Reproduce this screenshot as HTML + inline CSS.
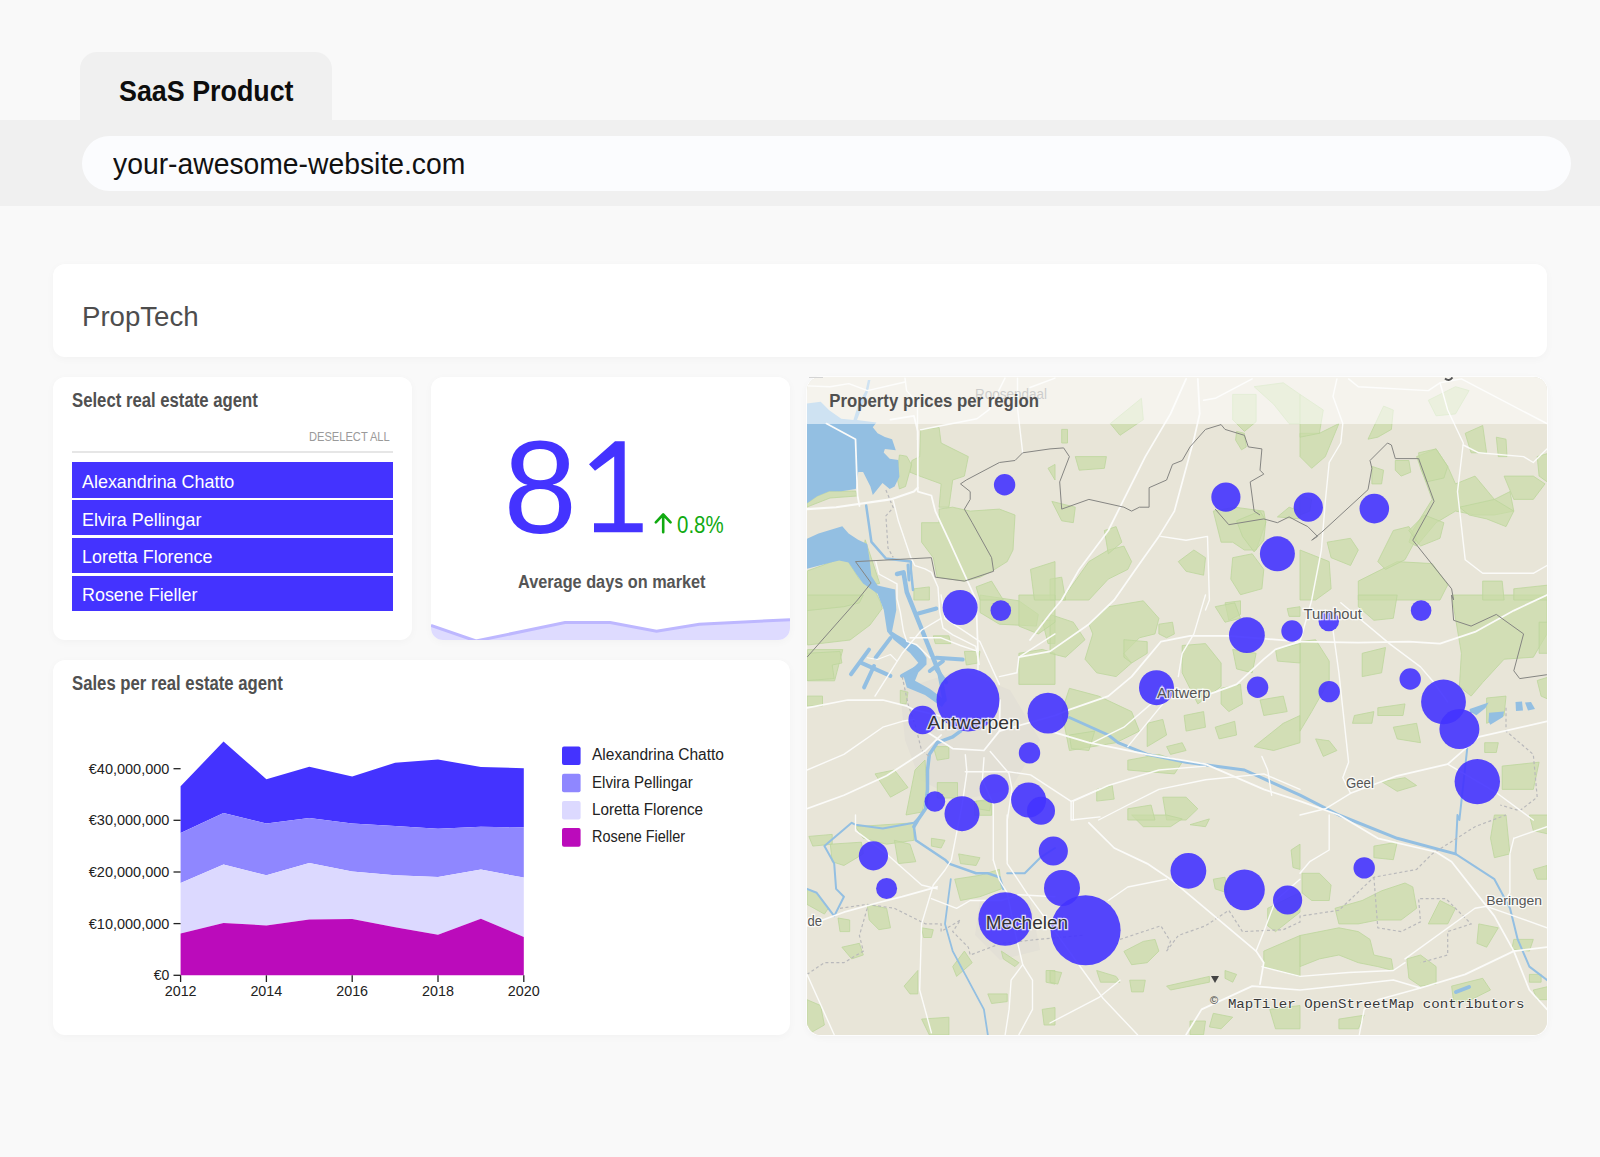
<!DOCTYPE html>
<html><head><meta charset="utf-8">
<style>
*{margin:0;padding:0;box-sizing:border-box}
html,body{width:1600px;height:1157px;overflow:hidden;background:#f9f9f9;font-family:"Liberation Sans",sans-serif}
.abs{position:absolute}
.t{position:absolute;white-space:nowrap;line-height:1}
#tab{left:80px;top:52px;width:252px;height:68px;background:#f0f0f0;border-radius:17px 17px 0 0}
#band{left:0;top:120px;width:1600px;height:86px;background:#f0f0f0}
#pill{left:82px;top:136px;width:1489px;height:55px;background:#fbfcfe;border-radius:28px}
.card{position:absolute;background:#fff;border-radius:12px;box-shadow:0 2px 8px rgba(0,0,0,0.03)}
.item{position:absolute;left:72px;width:321px;height:35.4px;background:#4433ff}
.item span{position:absolute;left:9.5px;top:10.6px;color:#fff;font-size:18.5px;line-height:1;white-space:nowrap;transform:scaleX(0.968);transform-origin:0 0}
</style></head>
<body>
<div id="tab" class="abs"></div>
<div id="band" class="abs"></div>
<div id="pill" class="abs"></div>
<div class="t" id="saas" style="left:119px;top:76px;font-size:29.5px;font-weight:bold;color:#0d0d0d;transform:scaleX(0.91);transform-origin:0 0">SaaS Product</div>
<div class="t" id="url" style="left:113px;top:149px;font-size:29.4px;color:#111;transform:scaleX(0.963);transform-origin:0 0">your-awesome-website.com</div>

<div class="card" style="left:53px;top:264px;width:1494px;height:93px"></div>
<div class="t" id="prop" style="left:82px;top:302.5px;font-size:28px;color:#4d4d4d;transform:scaleX(0.986);transform-origin:0 0">PropTech</div>

<!-- select card -->
<div class="card" style="left:53px;top:377px;width:359px;height:263px"></div>
<div class="t" id="selt" style="left:72px;top:391px;font-size:19.5px;font-weight:bold;color:#505050;transform:scaleX(0.857);transform-origin:0 0">Select real estate agent</div>
<div class="t" id="desel" style="left:309px;top:430px;font-size:13px;color:#9a9a9a;transform:scaleX(0.855);transform-origin:0 0">DESELECT ALL</div>
<div class="abs" style="left:72px;top:451px;width:321px;height:2px;background:#e6e6e6"></div>
<div class="item" style="top:462.4px"><span>Alexandrina Chatto</span></div>
<div class="item" style="top:500.1px"><span>Elvira Pellingar</span></div>
<div class="item" style="top:537.8px"><span>Loretta Florence</span></div>
<div class="item" style="top:575.5px"><span>Rosene Fieller</span></div>

<!-- KPI card -->
<div class="card" style="left:431px;top:377px;width:359px;height:263px;overflow:hidden">
  <svg class="abs" style="left:0;top:0" width="359" height="263">
    <polygon points="0,248.5 45,264 134,245.5 179.2,245.5 225.5,254.3 268.3,247.3 359,242.7 359,263 0,263" fill="#dedbff"/>
    <polyline points="0,248.5 45,264 134,245.5 179.2,245.5 225.5,254.3 268.3,247.3 359,242.7" fill="none" stroke="#bdb7ff" stroke-width="3"/>
  </svg>
</div>
<div class="t" id="big" style="left:503.5px;top:421.8px;font-size:132px;color:#4433ff">8</div>
<svg class="abs" style="left:0;top:0" width="800" height="600"><polygon points="615,441.2 624.7,441.2 624.7,523.2 642.7,523.2 642.7,532.2 594,532.2 594,523.2 614.2,523.2 614.2,456.5 595,470.7 589,464.3" fill="#4433ff"/>
<path d="M663.2,532.2 V515 M655.8,522.3 L663.2,514.5 L670.6,522.3" fill="none" stroke="#11aa11" stroke-width="2.6" stroke-linecap="round" stroke-linejoin="round"/></svg>
<div class="t" id="pct" style="left:676.5px;top:514px;font-size:23px;color:#11aa11;transform:scaleX(0.89);transform-origin:0 0">0.8%</div>
<div class="t" id="avg" style="left:517.5px;top:573px;font-size:18px;font-weight:bold;color:#555;transform:scaleX(0.904);transform-origin:0 0">Average days on market</div>

<!-- chart card -->
<div class="card" style="left:53px;top:660px;width:737px;height:375px"></div>
<div class="t" id="salt" style="left:72px;top:674px;font-size:19.5px;font-weight:bold;color:#505050;transform:scaleX(0.857);transform-origin:0 0">Sales per real estate agent</div>
<svg class="abs" style="left:0;top:0;font-family:'Liberation Sans',sans-serif" width="800" height="1050" id="chart">
<polygon points="180.6,786.2 223.5,741.6 266.4,779.2 309.3,766.8 352.2,776.5 395.1,762.7 438.0,759.5 480.9,767.0 523.8,768.2 523.8,827.3 480.9,826.8 438.0,828.7 395.1,826.1 352.2,823.4 309.3,818.1 266.4,823.6 223.5,813.0 180.6,832.9" fill="#4433ff"/>
<polygon points="180.6,832.9 223.5,813.0 266.4,823.6 309.3,818.1 352.2,823.4 395.1,826.1 438.0,828.7 480.9,826.8 523.8,827.3 523.8,877.6 480.9,869.6 438.0,876.9 395.1,875.2 352.2,871.6 309.3,863.1 266.4,875.3 223.5,864.6 180.6,883.0" fill="#8f87ff"/>
<polygon points="180.6,883.0 223.5,864.6 266.4,875.3 309.3,863.1 352.2,871.6 395.1,875.2 438.0,876.9 480.9,869.6 523.8,877.6 523.8,936.9 480.9,918.8 438.0,934.7 395.1,927.2 352.2,919.0 309.3,919.5 266.4,925.4 223.5,923.0 180.6,933.4" fill="#dcd9ff"/>
<polygon points="180.6,933.4 223.5,923.0 266.4,925.4 309.3,919.5 352.2,919.0 395.1,927.2 438.0,934.7 480.9,918.8 523.8,936.9 523.8,975.3 480.9,975.3 438.0,975.3 395.1,975.3 352.2,975.3 309.3,975.3 266.4,975.3 223.5,975.3 180.6,975.3" fill="#bb0bbb"/>
<line x1="173.5" y1="975.3" x2="180.6" y2="975.3" stroke="#222" stroke-width="1.3"/>
<text x="153.8" y="980.3" font-size="14.3" fill="#222" textLength="15.6" lengthAdjust="spacingAndGlyphs">€0</text>
<line x1="173.5" y1="923.6" x2="180.6" y2="923.6" stroke="#222" stroke-width="1.3"/>
<text x="88.8" y="928.6" font-size="14.3" fill="#222" textLength="80.6" lengthAdjust="spacingAndGlyphs">€10,000,000</text>
<line x1="173.5" y1="872.0" x2="180.6" y2="872.0" stroke="#222" stroke-width="1.3"/>
<text x="88.8" y="877.0" font-size="14.3" fill="#222" textLength="80.6" lengthAdjust="spacingAndGlyphs">€20,000,000</text>
<line x1="173.5" y1="820.3" x2="180.6" y2="820.3" stroke="#222" stroke-width="1.3"/>
<text x="88.8" y="825.3" font-size="14.3" fill="#222" textLength="80.6" lengthAdjust="spacingAndGlyphs">€30,000,000</text>
<line x1="173.5" y1="768.7" x2="180.6" y2="768.7" stroke="#222" stroke-width="1.3"/>
<text x="88.8" y="773.7" font-size="14.3" fill="#222" textLength="80.6" lengthAdjust="spacingAndGlyphs">€40,000,000</text>
<line x1="180.6" y1="975.3" x2="180.6" y2="982" stroke="#222" stroke-width="1.3"/>
<text x="164.7" y="996" font-size="14.3" fill="#222" textLength="31.9" lengthAdjust="spacingAndGlyphs">2012</text>
<line x1="266.4" y1="975.3" x2="266.4" y2="982" stroke="#222" stroke-width="1.3"/>
<text x="250.4" y="996" font-size="14.3" fill="#222" textLength="31.9" lengthAdjust="spacingAndGlyphs">2014</text>
<line x1="352.2" y1="975.3" x2="352.2" y2="982" stroke="#222" stroke-width="1.3"/>
<text x="336.2" y="996" font-size="14.3" fill="#222" textLength="31.9" lengthAdjust="spacingAndGlyphs">2016</text>
<line x1="438.0" y1="975.3" x2="438.0" y2="982" stroke="#222" stroke-width="1.3"/>
<text x="422.1" y="996" font-size="14.3" fill="#222" textLength="31.9" lengthAdjust="spacingAndGlyphs">2018</text>
<line x1="523.8" y1="975.3" x2="523.8" y2="982" stroke="#222" stroke-width="1.3"/>
<text x="507.8" y="996" font-size="14.3" fill="#222" textLength="31.9" lengthAdjust="spacingAndGlyphs">2020</text>
<rect x="562" y="746.5" width="18.6" height="18.6" rx="2" fill="#4433ff"/>
<text x="592" y="760.4" font-size="16" fill="#222" textLength="132" lengthAdjust="spacingAndGlyphs">Alexandrina Chatto</text>
<rect x="562" y="773.7" width="18.6" height="18.6" rx="2" fill="#8f87ff"/>
<text x="592" y="787.6" font-size="16" fill="#222" textLength="100.7" lengthAdjust="spacingAndGlyphs">Elvira Pellingar</text>
<rect x="562" y="800.9" width="18.6" height="18.6" rx="2" fill="#dcd9ff"/>
<text x="592" y="814.8" font-size="16" fill="#222" textLength="111" lengthAdjust="spacingAndGlyphs">Loretta Florence</text>
<rect x="562" y="828.1" width="18.6" height="18.6" rx="2" fill="#bb0bbb"/>
<text x="592" y="842.0" font-size="16" fill="#222" textLength="93.1" lengthAdjust="spacingAndGlyphs">Rosene Fieller</text>
</svg>

<!-- map card -->
<div class="card" id="map" style="left:807px;top:377px;width:740px;height:658px;overflow:hidden;background:#e8e5d8;border-radius:14px;box-shadow:0 0 0 1px #fdfdfd,0 2px 8px rgba(0,0,0,0.04)">
<svg class="abs" style="left:0;top:0" width="740" height="658" viewBox="807 377 740 658" font-family="Liberation Sans, sans-serif">
<rect x="807" y="377" width="740" height="658" fill="#e8e5d8"/>
<polygon points="900.0,690.0 960.0,670.0 1010.0,690.0 1040.0,740.0 1010.0,790.0 960.0,800.0 920.0,780.0 905.0,740.0" fill="#e3e0d6"/>
<polygon points="980.0,900.0 1030.0,900.0 1040.0,950.0 1000.0,960.0 975.0,935.0" fill="#e3e0d6"/>
<polygon points="939.1,509.1 952.7,507.2 970.2,511.1 999.4,509.1 1015.0,515.0 1013.0,550.0 1007.2,561.6 991.6,571.3 980.0,577.2 964.4,581.1 937.2,577.2 933.3,557.7 921.6,542.2 921.6,522.7 939.1,522.7" fill="#c9dca6" fill-opacity="0.7" stroke="#bdd59c" stroke-width="0.8"/>
<polygon points="920.7,429.4 939.1,427.5 941.1,443.0 968.3,456.6 964.4,476.1 952.7,480.0 948.9,507.2 939.1,507.2 941.1,483.9 919.7,476.1 910.0,472.2 911.9,460.5 919.7,456.6" fill="#c9dca6" fill-opacity="0.7" stroke="#bdd59c" stroke-width="0.8"/>
<polygon points="807.5,570.8 821.4,565.8 837.8,559.3 847.7,560.9 859.2,579.0 874.0,588.8 880.5,602.0 882.2,608.5 870.0,625.0 850.0,640.0 807.5,645.0" fill="#c9dca6" fill-opacity="0.7" stroke="#bdd59c" stroke-width="0.8"/>
<polygon points="807.5,649.6 842.8,649.6 834.6,680.8 807.5,680.8" fill="#c9dca6" fill-opacity="0.7" stroke="#bdd59c" stroke-width="0.8"/>
<polygon points="899.4,455.0 906.7,456.2 911.5,464.7 905.5,486.5 899.4,488.9 897.0,476.8" fill="#c9dca6" fill-opacity="0.7" stroke="#bdd59c" stroke-width="0.8"/>
<polygon points="860.7,435.7 877.6,435.7 877.6,442.9 861.9,445.4" fill="#c9dca6" fill-opacity="0.7" stroke="#bdd59c" stroke-width="0.8"/>
<polygon points="806.8,503.4 817.1,496.2 829.2,491.3 855.8,491.0 857.0,496.0 830.0,498.0 807.0,507.0" fill="#c9dca6" fill-opacity="0.7" stroke="#bdd59c" stroke-width="0.8"/>
<polygon points="1061.7,600.0 1088.9,561.6 1108.3,550.0 1123.9,546.1 1131.6,561.6 1127.8,569.4 1108.3,579.1 1088.9,600.0" fill="#c9dca6" fill-opacity="0.7" stroke="#bdd59c" stroke-width="0.8"/>
<polygon points="1104.4,530.5 1116.1,526.6 1121.9,542.2 1108.3,553.8" fill="#c9dca6" fill-opacity="0.7" stroke="#bdd59c" stroke-width="0.8"/>
<polygon points="1213.3,511.1 1234.7,507.2 1263.8,511.1 1265.8,522.7 1256.1,550.0 1244.4,550.0 1232.7,542.2 1221.1,542.2" fill="#c9dca6" fill-opacity="0.7" stroke="#bdd59c" stroke-width="0.8"/>
<polygon points="1232.7,557.7 1252.2,553.8 1263.8,569.4 1261.9,588.8 1240.5,594.7 1230.8,579.1" fill="#c9dca6" fill-opacity="0.7" stroke="#bdd59c" stroke-width="0.8"/>
<polygon points="1178.3,561.6 1193.9,550.0 1205.5,557.7 1203.6,575.2 1186.1,571.3" fill="#c9dca6" fill-opacity="0.7" stroke="#bdd59c" stroke-width="0.8"/>
<polygon points="1110.3,423.6 1141.4,398.3 1143.3,419.7 1120.0,435.3" fill="#c9dca6" fill-opacity="0.7" stroke="#bdd59c" stroke-width="0.8"/>
<polygon points="1075.3,456.6 1106.4,456.6 1104.4,468.3 1079.2,470.2" fill="#c9dca6" fill-opacity="0.7" stroke="#bdd59c" stroke-width="0.8"/>
<polygon points="1051.9,501.4 1075.3,507.2 1073.3,522.7 1061.7,520.8" fill="#c9dca6" fill-opacity="0.7" stroke="#bdd59c" stroke-width="0.8"/>
<polygon points="1416.6,456.6 1436.1,448.9 1447.7,466.4 1455.5,483.9 1475.0,476.1 1494.4,499.4 1510.0,491.6 1513.8,511.1 1494.4,515.0 1475.0,515.0 1455.5,511.1 1436.1,522.7 1416.6,546.1 1408.9,542.2 1412.8,530.5 1432.2,499.4" fill="#c9dca6" fill-opacity="0.7" stroke="#bdd59c" stroke-width="0.8"/>
<polygon points="1358.3,581.1 1397.2,561.6 1432.2,563.6 1447.7,584.9 1440.0,600.0 1358.3,600.0" fill="#c9dca6" fill-opacity="0.7" stroke="#bdd59c" stroke-width="0.8"/>
<polygon points="1393.3,530.5 1408.9,526.6 1416.6,538.3 1405.0,559.7 1385.5,569.4 1377.8,561.6" fill="#c9dca6" fill-opacity="0.7" stroke="#bdd59c" stroke-width="0.8"/>
<polygon points="1300.0,433.3 1319.4,433.3 1338.9,423.6 1325.3,456.6 1311.7,468.3 1300.0,456.6" fill="#c9dca6" fill-opacity="0.7" stroke="#bdd59c" stroke-width="0.8"/>
<polygon points="1300.0,550.0 1329.2,561.6 1331.1,588.8 1315.6,600.0 1300.0,600.0" fill="#c9dca6" fill-opacity="0.7" stroke="#bdd59c" stroke-width="0.8"/>
<polygon points="1327.2,542.2 1350.5,538.3 1358.3,550.0 1350.5,565.5 1331.1,557.7" fill="#c9dca6" fill-opacity="0.7" stroke="#bdd59c" stroke-width="0.8"/>
<polygon points="1368.0,439.2 1383.6,406.1 1393.3,410.0 1391.4,429.4 1377.8,437.2" fill="#c9dca6" fill-opacity="0.7" stroke="#bdd59c" stroke-width="0.8"/>
<polygon points="1504.1,476.1 1533.3,476.1 1545.0,483.9 1533.3,499.4 1513.8,499.4" fill="#c9dca6" fill-opacity="0.7" stroke="#bdd59c" stroke-width="0.8"/>
<polygon points="1465.2,433.3 1482.7,425.5 1486.6,452.8 1471.1,452.8" fill="#c9dca6" fill-opacity="0.7" stroke="#bdd59c" stroke-width="0.8"/>
<polygon points="807.0,595.0 863.3,595.0 859.4,602.8 843.9,606.7 807.0,610.6" fill="#c9dca6" fill-opacity="0.7" stroke="#bdd59c" stroke-width="0.8"/>
<polygon points="807.0,653.3 840.0,651.4 841.9,663.0 832.2,665.0 834.2,678.6 807.0,680.5" fill="#c9dca6" fill-opacity="0.7" stroke="#bdd59c" stroke-width="0.8"/>
<polygon points="807.0,696.1 822.5,696.1 822.5,705.8 807.0,705.8" fill="#c9dca6" fill-opacity="0.7" stroke="#bdd59c" stroke-width="0.8"/>
<polygon points="980.0,595.0 1018.9,600.8 1038.3,614.4 1036.3,626.1 999.4,624.2 980.0,612.5" fill="#c9dca6" fill-opacity="0.7" stroke="#bdd59c" stroke-width="0.8"/>
<polygon points="1018.9,653.3 1042.2,649.4 1055.0,653.3 1055.0,684.4 1018.9,684.4" fill="#c9dca6" fill-opacity="0.7" stroke="#bdd59c" stroke-width="0.8"/>
<polygon points="875.0,773.9 894.4,770.0 908.0,787.5 890.5,797.2" fill="#c9dca6" fill-opacity="0.7" stroke="#bdd59c" stroke-width="0.8"/>
<polygon points="906.0,815.0 915.0,770.0 925.0,760.0 927.0,790.0 922.0,812.0" fill="#c9dca6" fill-opacity="0.7" stroke="#bdd59c" stroke-width="0.8"/>
<polygon points="937.3,782.6 957.5,782.6 957.5,798.0 937.3,798.0" fill="#c9dca6" fill-opacity="0.7" stroke="#bdd59c" stroke-width="0.8"/>
<polygon points="974.6,801.3 991.7,801.3 991.7,815.3 974.6,815.3" fill="#c9dca6" fill-opacity="0.7" stroke="#bdd59c" stroke-width="0.8"/>
<polygon points="1042.2,620.3 1055.0,620.3 1055.0,643.6 1048.0,643.6" fill="#c9dca6" fill-opacity="0.7" stroke="#bdd59c" stroke-width="0.8"/>
<polygon points="1108.3,606.7 1143.3,600.8 1158.9,618.3 1155.0,633.9 1139.4,637.8 1123.9,653.3 1131.6,663.0 1116.1,676.6 1096.7,672.8 1085.0,659.2 1092.8,633.9 1088.9,624.2" fill="#c9dca6" fill-opacity="0.7" stroke="#bdd59c" stroke-width="0.8"/>
<polygon points="1050.0,614.4 1073.3,622.2 1085.0,639.7 1065.6,657.2 1050.0,653.3" fill="#c9dca6" fill-opacity="0.7" stroke="#bdd59c" stroke-width="0.8"/>
<polygon points="1182.2,645.5 1205.5,643.6 1221.1,663.0 1221.1,686.4 1197.8,703.9 1182.2,672.8" fill="#c9dca6" fill-opacity="0.7" stroke="#bdd59c" stroke-width="0.8"/>
<polygon points="1123.9,639.7 1147.2,641.7 1147.2,653.3 1131.6,663.0 1123.9,657.2" fill="#c9dca6" fill-opacity="0.7" stroke="#bdd59c" stroke-width="0.8"/>
<polygon points="1158.9,624.2 1172.5,622.2 1174.4,633.9 1166.6,637.8 1158.9,633.9" fill="#c9dca6" fill-opacity="0.7" stroke="#bdd59c" stroke-width="0.8"/>
<polygon points="1069.4,688.3 1098.6,696.1 1131.6,711.6 1139.4,731.1 1116.1,742.7 1069.4,750.5 1061.7,711.6" fill="#c9dca6" fill-opacity="0.7" stroke="#bdd59c" stroke-width="0.8"/>
<polygon points="1147.2,723.3 1162.8,719.4 1166.6,735.0 1147.2,746.6" fill="#c9dca6" fill-opacity="0.7" stroke="#bdd59c" stroke-width="0.8"/>
<polygon points="1127.8,760.2 1158.9,754.4 1182.2,762.2 1174.4,773.9 1127.8,770.0" fill="#c9dca6" fill-opacity="0.7" stroke="#bdd59c" stroke-width="0.8"/>
<polygon points="1254.1,746.6 1283.3,723.3 1300.0,715.5 1300.0,742.7 1273.6,750.5" fill="#c9dca6" fill-opacity="0.7" stroke="#bdd59c" stroke-width="0.8"/>
<polygon points="1221.1,688.3 1240.5,684.4 1242.5,703.9 1228.8,711.6 1221.1,703.9" fill="#c9dca6" fill-opacity="0.7" stroke="#bdd59c" stroke-width="0.8"/>
<polygon points="1184.1,715.5 1203.6,711.6 1205.5,727.2 1186.1,731.1" fill="#c9dca6" fill-opacity="0.7" stroke="#bdd59c" stroke-width="0.8"/>
<polygon points="1215.2,727.2 1234.7,721.3 1236.6,735.0 1219.1,738.9" fill="#c9dca6" fill-opacity="0.7" stroke="#bdd59c" stroke-width="0.8"/>
<polygon points="1225.0,602.8 1240.5,600.8 1240.5,614.4 1228.8,620.3" fill="#c9dca6" fill-opacity="0.7" stroke="#bdd59c" stroke-width="0.8"/>
<polygon points="1162.8,797.2 1186.1,797.2 1197.8,808.8 1186.1,820.0 1166.6,820.0" fill="#c9dca6" fill-opacity="0.7" stroke="#bdd59c" stroke-width="0.8"/>
<polygon points="1232.7,649.4 1256.1,653.3 1252.2,672.8 1236.6,668.9" fill="#c9dca6" fill-opacity="0.7" stroke="#bdd59c" stroke-width="0.8"/>
<polygon points="1358.3,595.0 1397.2,595.0 1393.3,618.3 1373.9,620.3 1358.3,606.7" fill="#c9dca6" fill-opacity="0.7" stroke="#bdd59c" stroke-width="0.8"/>
<polygon points="1451.6,595.0 1494.4,595.0 1547.0,595.0 1547.0,633.9 1533.3,657.2 1504.1,659.2 1482.7,682.5 1471.1,696.1 1459.4,686.4 1461.4,653.3" fill="#c9dca6" fill-opacity="0.7" stroke="#bdd59c" stroke-width="0.8"/>
<polygon points="1300.0,641.7 1315.6,639.7 1329.2,661.1 1329.2,680.5 1311.7,711.6 1300.0,731.1" fill="#c9dca6" fill-opacity="0.7" stroke="#bdd59c" stroke-width="0.8"/>
<polygon points="1362.2,653.3 1385.5,647.5 1381.6,672.8 1362.2,676.6" fill="#c9dca6" fill-opacity="0.7" stroke="#bdd59c" stroke-width="0.8"/>
<polygon points="1486.6,698.0 1506.0,696.1 1504.1,715.5 1486.6,723.3" fill="#c9dca6" fill-opacity="0.7" stroke="#bdd59c" stroke-width="0.8"/>
<polygon points="1502.2,766.1 1539.1,762.2 1533.3,789.4 1502.2,789.4" fill="#c9dca6" fill-opacity="0.7" stroke="#bdd59c" stroke-width="0.8"/>
<polygon points="1393.3,727.2 1416.6,723.3 1420.5,742.7 1397.2,738.9" fill="#c9dca6" fill-opacity="0.7" stroke="#bdd59c" stroke-width="0.8"/>
<polygon points="1315.6,738.9 1329.2,740.8 1336.9,750.5 1323.3,756.4" fill="#c9dca6" fill-opacity="0.7" stroke="#bdd59c" stroke-width="0.8"/>
<polygon points="808.9,836.4 832.2,834.4 832.2,844.2 812.8,846.1" fill="#c9dca6" fill-opacity="0.7" stroke="#bdd59c" stroke-width="0.8"/>
<polygon points="830.3,844.2 861.4,842.2 863.3,853.9 843.9,865.5 832.2,861.7" fill="#c9dca6" fill-opacity="0.7" stroke="#bdd59c" stroke-width="0.8"/>
<polygon points="855.5,826.7 913.9,822.8 913.9,840.3 886.6,844.2 863.3,838.3" fill="#c9dca6" fill-opacity="0.7" stroke="#bdd59c" stroke-width="0.8"/>
<polygon points="807.0,888.9 816.7,892.8 828.3,908.3 824.4,914.1 807.0,904.4" fill="#c9dca6" fill-opacity="0.7" stroke="#bdd59c" stroke-width="0.8"/>
<polygon points="894.4,840.3 910.0,844.2 915.8,861.7 898.3,863.6" fill="#c9dca6" fill-opacity="0.7" stroke="#bdd59c" stroke-width="0.8"/>
<polygon points="954.7,879.2 980.0,875.3 999.4,869.4 1001.3,888.9 980.0,896.7 960.5,900.5" fill="#c9dca6" fill-opacity="0.7" stroke="#bdd59c" stroke-width="0.8"/>
<polygon points="867.2,904.4 886.6,908.3 890.5,927.8 878.9,929.7 869.2,920.0" fill="#c9dca6" fill-opacity="0.7" stroke="#bdd59c" stroke-width="0.8"/>
<polygon points="841.9,947.2 859.4,943.3 863.3,955.0 851.7,958.9" fill="#c9dca6" fill-opacity="0.7" stroke="#bdd59c" stroke-width="0.8"/>
<polygon points="807.0,999.7 820.6,1005.5 824.4,1025.0 810.8,1032.7 807.0,1032.0" fill="#c9dca6" fill-opacity="0.7" stroke="#bdd59c" stroke-width="0.8"/>
<polygon points="904.1,986.1 917.8,970.5 917.8,993.9 910.0,993.9" fill="#c9dca6" fill-opacity="0.7" stroke="#bdd59c" stroke-width="0.8"/>
<polygon points="952.7,966.6 964.4,951.1 972.2,962.7 956.6,976.4" fill="#c9dca6" fill-opacity="0.7" stroke="#bdd59c" stroke-width="0.8"/>
<polygon points="921.6,1019.1 948.9,1017.2 948.9,1035.0 929.4,1035.0" fill="#c9dca6" fill-opacity="0.7" stroke="#bdd59c" stroke-width="0.8"/>
<polygon points="1001.3,951.1 1018.9,962.7 1015.0,966.6 1003.3,958.9" fill="#c9dca6" fill-opacity="0.7" stroke="#bdd59c" stroke-width="0.8"/>
<polygon points="1123.9,951.4 1143.3,941.4 1155.0,939.4 1158.9,951.1 1147.2,962.7 1131.6,964.7" fill="#c9dca6" fill-opacity="0.7" stroke="#bdd59c" stroke-width="0.8"/>
<polygon points="1131.6,815.0 1166.6,815.0 1182.2,818.9 1170.5,826.7 1143.3,826.7" fill="#c9dca6" fill-opacity="0.7" stroke="#bdd59c" stroke-width="0.8"/>
<polygon points="1166.6,986.1 1209.4,976.4 1209.4,982.2 1170.5,990.0" fill="#c9dca6" fill-opacity="0.7" stroke="#bdd59c" stroke-width="0.8"/>
<polygon points="1213.3,879.2 1225.0,877.2 1226.9,892.8 1215.2,888.9" fill="#c9dca6" fill-opacity="0.7" stroke="#bdd59c" stroke-width="0.8"/>
<polygon points="1267.7,908.3 1291.1,896.7 1300.0,892.8 1300.0,912.2 1275.5,931.6 1267.7,925.8" fill="#c9dca6" fill-opacity="0.7" stroke="#bdd59c" stroke-width="0.8"/>
<polygon points="1263.8,951.1 1300.0,935.5 1300.0,976.4 1263.8,966.6" fill="#c9dca6" fill-opacity="0.7" stroke="#bdd59c" stroke-width="0.8"/>
<polygon points="1129.7,980.2 1145.3,980.2 1143.3,991.9 1131.6,991.9" fill="#c9dca6" fill-opacity="0.7" stroke="#bdd59c" stroke-width="0.8"/>
<polygon points="1213.3,1013.3 1232.7,1017.2 1221.1,1028.8 1209.4,1026.9" fill="#c9dca6" fill-opacity="0.7" stroke="#bdd59c" stroke-width="0.8"/>
<polygon points="1269.7,1009.4 1300.0,1005.5 1300.0,1028.8 1275.5,1028.8" fill="#c9dca6" fill-opacity="0.7" stroke="#bdd59c" stroke-width="0.8"/>
<polygon points="1291.1,850.0 1300.0,844.2 1300.0,869.4 1293.0,867.5" fill="#c9dca6" fill-opacity="0.7" stroke="#bdd59c" stroke-width="0.8"/>
<polygon points="1300.0,935.5 1338.9,927.8 1358.3,931.6 1370.0,939.4 1373.9,955.0 1391.4,958.9 1393.3,970.5 1377.8,966.6 1358.3,962.7 1338.9,955.0 1319.4,958.9 1300.0,966.6" fill="#c9dca6" fill-opacity="0.7" stroke="#bdd59c" stroke-width="0.8"/>
<polygon points="1335.0,908.3 1362.2,900.5 1381.6,890.8 1405.0,883.0 1412.8,886.9 1416.6,908.3 1401.1,920.0 1377.8,920.0 1358.3,923.9 1338.9,923.9" fill="#c9dca6" fill-opacity="0.7" stroke="#bdd59c" stroke-width="0.8"/>
<polygon points="1302.0,873.3 1319.4,873.3 1331.1,885.0 1329.2,900.5 1311.7,900.5 1302.0,892.8" fill="#c9dca6" fill-opacity="0.7" stroke="#bdd59c" stroke-width="0.8"/>
<polygon points="1373.9,846.1 1397.2,842.2 1393.3,859.7 1373.9,857.7" fill="#c9dca6" fill-opacity="0.7" stroke="#bdd59c" stroke-width="0.8"/>
<polygon points="1494.4,815.0 1506.0,815.0 1509.9,853.9 1494.4,857.7 1490.5,838.3" fill="#c9dca6" fill-opacity="0.7" stroke="#bdd59c" stroke-width="0.8"/>
<polygon points="1440.0,900.5 1455.5,908.3 1447.7,923.9 1428.3,923.9" fill="#c9dca6" fill-opacity="0.7" stroke="#bdd59c" stroke-width="0.8"/>
<polygon points="1478.8,923.9 1498.3,927.8 1486.6,947.2 1476.9,943.3" fill="#c9dca6" fill-opacity="0.7" stroke="#bdd59c" stroke-width="0.8"/>
<polygon points="1406.9,958.9 1420.5,955.0 1436.1,966.6 1436.1,984.1 1420.5,986.1 1408.9,978.3" fill="#c9dca6" fill-opacity="0.7" stroke="#bdd59c" stroke-width="0.8"/>
<polygon points="1451.6,986.1 1482.7,978.3 1490.5,990.0 1467.2,1001.6 1453.6,1001.6" fill="#c9dca6" fill-opacity="0.7" stroke="#bdd59c" stroke-width="0.8"/>
<polygon points="1513.8,939.4 1533.3,939.4 1529.4,951.1 1511.9,949.1" fill="#c9dca6" fill-opacity="0.7" stroke="#bdd59c" stroke-width="0.8"/>
<polygon points="1533.3,869.4 1547.0,865.5 1547.0,879.2 1537.2,879.2" fill="#c9dca6" fill-opacity="0.7" stroke="#bdd59c" stroke-width="0.8"/>
<polygon points="865.2,539.8 879.7,583.4 872.0,585.0 862.0,560.0" fill="#c9dca6" fill-opacity="0.7" stroke="#bdd59c" stroke-width="0.8"/>
<polygon points="1232.7,394.4 1256.1,394.4 1256.1,421.7 1244.4,431.4 1232.7,419.7" fill="#c9dca6" fill-opacity="0.7" stroke="#bdd59c" stroke-width="0.8"/>
<polygon points="1254.1,386.7 1283.3,382.8 1300.0,394.4 1300.0,423.6 1289.1,423.6 1273.6,404.2" fill="#c9dca6" fill-opacity="0.7" stroke="#bdd59c" stroke-width="0.8"/>
<polygon points="1236.6,431.4 1244.4,433.3 1246.3,446.9 1241.5,449.8 1235.6,440.1" fill="#c9dca6" fill-opacity="0.7" stroke="#bdd59c" stroke-width="0.8"/>
<polygon points="1061.7,429.4 1067.5,429.4 1067.5,443.0 1061.7,443.0" fill="#c9dca6" fill-opacity="0.7" stroke="#bdd59c" stroke-width="0.8"/>
<polygon points="1236.6,520.8 1260.0,511.1 1265.8,520.8 1263.8,540.2 1254.1,551.9 1242.5,536.4" fill="#c9dca6" fill-opacity="0.7" stroke="#bdd59c" stroke-width="0.8"/>
<polygon points="1277.4,516.9 1289.1,507.2 1300.0,511.1 1300.0,518.9" fill="#c9dca6" fill-opacity="0.7" stroke="#bdd59c" stroke-width="0.8"/>
<polygon points="1050.0,579.1 1061.7,577.2 1065.6,600.0 1050.0,600.0" fill="#c9dca6" fill-opacity="0.7" stroke="#bdd59c" stroke-width="0.8"/>
<polygon points="1300.0,394.4 1323.3,410.0 1319.4,433.3 1300.0,437.2" fill="#c9dca6" fill-opacity="0.7" stroke="#bdd59c" stroke-width="0.8"/>
<polygon points="1428.3,400.3 1455.5,386.7 1469.1,390.6 1455.5,413.9 1436.1,415.8" fill="#c9dca6" fill-opacity="0.7" stroke="#bdd59c" stroke-width="0.8"/>
<polygon points="1395.3,460.5 1408.9,460.5 1410.8,472.2 1401.1,476.1 1395.3,470.2" fill="#c9dca6" fill-opacity="0.7" stroke="#bdd59c" stroke-width="0.8"/>
<polygon points="1371.9,466.4 1383.6,470.2 1381.6,483.9 1371.9,483.9" fill="#c9dca6" fill-opacity="0.7" stroke="#bdd59c" stroke-width="0.8"/>
<polygon points="1418.6,452.8 1436.1,448.9 1447.7,466.4 1443.9,478.0 1426.4,481.9 1420.5,468.3" fill="#c9dca6" fill-opacity="0.7" stroke="#bdd59c" stroke-width="0.8"/>
<polygon points="1496.3,437.2 1506.0,439.2 1507.0,456.6 1498.3,456.6" fill="#c9dca6" fill-opacity="0.7" stroke="#bdd59c" stroke-width="0.8"/>
<polygon points="1537.2,456.6 1550.0,452.8 1550.0,483.9 1539.1,476.1" fill="#c9dca6" fill-opacity="0.7" stroke="#bdd59c" stroke-width="0.8"/>
<polygon points="1300.0,495.5 1311.7,499.4 1309.7,511.1 1300.0,515.0" fill="#c9dca6" fill-opacity="0.7" stroke="#bdd59c" stroke-width="0.8"/>
<polygon points="1424.4,515.0 1443.9,522.7 1440.0,538.3 1420.5,546.1 1408.9,530.5" fill="#c9dca6" fill-opacity="0.7" stroke="#bdd59c" stroke-width="0.8"/>
<polygon points="1482.7,581.1 1502.2,581.1 1504.1,600.0 1482.7,600.0" fill="#c9dca6" fill-opacity="0.7" stroke="#bdd59c" stroke-width="0.8"/>
<polygon points="1513.8,588.8 1550.0,584.9 1550.0,600.0 1513.8,600.0" fill="#c9dca6" fill-opacity="0.7" stroke="#bdd59c" stroke-width="0.8"/>
<polygon points="1459.4,507.2 1494.4,499.4 1513.8,511.1 1506.0,526.6 1486.6,518.9 1469.1,515.0" fill="#c9dca6" fill-opacity="0.7" stroke="#bdd59c" stroke-width="0.8"/>
<polygon points="900.3,690.3 908.0,692.2 906.1,703.9 900.3,703.9" fill="#c9dca6" fill-opacity="0.7" stroke="#bdd59c" stroke-width="0.8"/>
<polygon points="933.3,635.8 948.9,635.8 950.8,643.6 935.3,643.6" fill="#c9dca6" fill-opacity="0.7" stroke="#bdd59c" stroke-width="0.8"/>
<polygon points="964.4,651.4 980.0,651.4 978.0,663.0 966.3,665.0" fill="#c9dca6" fill-opacity="0.7" stroke="#bdd59c" stroke-width="0.8"/>
<polygon points="1018.9,595.0 1055.0,595.0 1055.0,622.2 1038.3,633.9 1018.9,626.1" fill="#c9dca6" fill-opacity="0.7" stroke="#bdd59c" stroke-width="0.8"/>
<polygon points="933.3,746.6 948.9,746.6 948.9,758.3 937.2,760.2" fill="#c9dca6" fill-opacity="0.7" stroke="#bdd59c" stroke-width="0.8"/>
<polygon points="976.1,801.1 991.6,799.1 989.7,810.8 978.0,808.8" fill="#c9dca6" fill-opacity="0.7" stroke="#bdd59c" stroke-width="0.8"/>
<polygon points="1215.2,606.7 1234.7,602.8 1240.5,618.3 1225.0,622.2" fill="#c9dca6" fill-opacity="0.7" stroke="#bdd59c" stroke-width="0.8"/>
<polygon points="1287.2,608.6 1300.0,606.7 1300.0,616.4 1289.1,616.4" fill="#c9dca6" fill-opacity="0.7" stroke="#bdd59c" stroke-width="0.8"/>
<polygon points="1275.5,649.4 1300.0,643.6 1300.0,663.0 1277.4,661.1" fill="#c9dca6" fill-opacity="0.7" stroke="#bdd59c" stroke-width="0.8"/>
<polygon points="1260.0,700.0 1283.3,696.1 1287.2,711.6 1263.8,715.5" fill="#c9dca6" fill-opacity="0.7" stroke="#bdd59c" stroke-width="0.8"/>
<polygon points="1166.6,746.6 1182.2,742.7 1186.1,750.5 1170.5,754.4" fill="#c9dca6" fill-opacity="0.7" stroke="#bdd59c" stroke-width="0.8"/>
<polygon points="1069.4,735.0 1094.7,731.1 1088.9,750.5 1071.4,748.6" fill="#c9dca6" fill-opacity="0.7" stroke="#bdd59c" stroke-width="0.8"/>
<polygon points="1096.7,789.4 1112.2,785.5 1114.2,799.1 1096.7,801.1" fill="#c9dca6" fill-opacity="0.7" stroke="#bdd59c" stroke-width="0.8"/>
<polygon points="1127.8,808.8 1151.1,805.0 1155.0,820.0 1127.8,820.0" fill="#c9dca6" fill-opacity="0.7" stroke="#bdd59c" stroke-width="0.8"/>
<polygon points="1354.4,715.5 1373.9,711.6 1371.9,723.3 1352.5,723.3" fill="#c9dca6" fill-opacity="0.7" stroke="#bdd59c" stroke-width="0.8"/>
<polygon points="1377.8,707.8 1405.0,703.9 1403.0,715.5 1377.8,715.5" fill="#c9dca6" fill-opacity="0.7" stroke="#bdd59c" stroke-width="0.8"/>
<polygon points="1484.7,742.7 1498.3,742.7 1496.3,752.5 1484.7,752.5" fill="#c9dca6" fill-opacity="0.7" stroke="#bdd59c" stroke-width="0.8"/>
<polygon points="1539.1,622.2 1550.0,622.2 1550.0,653.3 1539.1,653.3" fill="#c9dca6" fill-opacity="0.7" stroke="#bdd59c" stroke-width="0.8"/>
<polygon points="1537.2,680.5 1550.0,676.6 1550.0,700.0 1541.1,696.1" fill="#c9dca6" fill-opacity="0.7" stroke="#bdd59c" stroke-width="0.8"/>
<polygon points="1381.6,781.6 1405.0,777.7 1416.6,785.5 1397.2,791.3" fill="#c9dca6" fill-opacity="0.7" stroke="#bdd59c" stroke-width="0.8"/>
<polygon points="931.4,838.3 945.0,840.3 941.1,848.0 931.4,846.1" fill="#c9dca6" fill-opacity="0.7" stroke="#bdd59c" stroke-width="0.8"/>
<polygon points="958.6,853.9 980.0,857.7 976.1,865.5 960.5,863.6" fill="#c9dca6" fill-opacity="0.7" stroke="#bdd59c" stroke-width="0.8"/>
<polygon points="838.0,918.0 849.7,920.0 849.7,931.6 840.0,931.6" fill="#c9dca6" fill-opacity="0.7" stroke="#bdd59c" stroke-width="0.8"/>
<polygon points="921.6,927.8 933.3,929.7 931.4,937.5 923.6,937.5" fill="#c9dca6" fill-opacity="0.7" stroke="#bdd59c" stroke-width="0.8"/>
<polygon points="987.8,993.9 1007.2,993.9 1007.2,1001.6 991.6,1003.5" fill="#c9dca6" fill-opacity="0.7" stroke="#bdd59c" stroke-width="0.8"/>
<polygon points="1046.1,970.5 1055.0,970.5 1055.0,984.1 1046.1,982.2" fill="#c9dca6" fill-opacity="0.7" stroke="#bdd59c" stroke-width="0.8"/>
<polygon points="1042.2,1009.4 1055.0,1007.5 1055.0,1025.0 1044.1,1025.0" fill="#c9dca6" fill-opacity="0.7" stroke="#bdd59c" stroke-width="0.8"/>
<polygon points="1190.0,824.7 1209.4,818.9 1205.5,826.7" fill="#c9dca6" fill-opacity="0.7" stroke="#bdd59c" stroke-width="0.8"/>
<polygon points="1096.7,970.5 1116.1,976.4 1120.0,982.2 1100.5,982.2" fill="#c9dca6" fill-opacity="0.7" stroke="#bdd59c" stroke-width="0.8"/>
<polygon points="1050.0,970.5 1061.7,972.5 1057.8,984.1 1050.0,982.2" fill="#c9dca6" fill-opacity="0.7" stroke="#bdd59c" stroke-width="0.8"/>
<polygon points="1225.0,970.5 1236.6,974.4 1232.7,982.2 1225.0,978.3" fill="#c9dca6" fill-opacity="0.7" stroke="#bdd59c" stroke-width="0.8"/>
<polygon points="1190.0,1021.0 1205.5,1021.0 1203.6,1034.7 1190.0,1034.7" fill="#c9dca6" fill-opacity="0.7" stroke="#bdd59c" stroke-width="0.8"/>
<polygon points="1529.4,815.0 1550.0,815.0 1550.0,834.4 1533.3,830.6" fill="#c9dca6" fill-opacity="0.7" stroke="#bdd59c" stroke-width="0.8"/>
<polygon points="1529.4,974.4 1541.1,974.4 1541.1,982.2 1529.4,982.2" fill="#c9dca6" fill-opacity="0.7" stroke="#bdd59c" stroke-width="0.8"/>
<polygon points="1338.9,1019.1 1364.2,1015.2 1358.3,1028.8 1338.9,1028.8" fill="#c9dca6" fill-opacity="0.7" stroke="#bdd59c" stroke-width="0.8"/>
<polygon points="1533.3,990.0 1550.0,986.1 1550.0,999.7 1537.2,999.7" fill="#c9dca6" fill-opacity="0.7" stroke="#bdd59c" stroke-width="0.8"/>
<polygon points="1048.0,468.3 1055.0,464.4 1055.0,480.0" fill="#c9dca6" fill-opacity="0.7" stroke="#bdd59c" stroke-width="0.8"/>
<polygon points="1030.5,569.4 1055.0,561.6 1055.0,600.0 1034.4,600.0" fill="#c9dca6" fill-opacity="0.7" stroke="#bdd59c" stroke-width="0.8"/>
<polygon points="976.1,586.9 991.6,581.1 1003.3,600.0 980.0,600.0" fill="#c9dca6" fill-opacity="0.7" stroke="#bdd59c" stroke-width="0.8"/>
<polygon points="913.9,588.8 929.4,586.9 929.4,600.0 913.9,600.0" fill="#c9dca6" fill-opacity="0.7" stroke="#bdd59c" stroke-width="0.8"/>
<polygon points="1469.7,709.1 1488.5,702.4 1485.5,707.9 1476.4,715.2 1469.7,711.5" fill="#93bfe2"/>
<polygon points="1489.1,712.7 1504.0,711.5 1503.0,717.0 1490.3,724.8 1488.5,721.2" fill="#93bfe2"/>
<polygon points="1515.5,702.0 1522.0,701.5 1523.0,710.5 1516.0,711.0" fill="#93bfe2"/>
<polygon points="1525.0,702.5 1531.0,702.0 1535.0,709.0 1528.0,710.5" fill="#93bfe2"/>
<polygon points="806.8,403.6 820.7,401.8 829.2,410.3 841.3,418.7 853.4,419.9 858.3,404.2 865.5,390.9 867.9,380.0 870.4,380.0 867.9,392.1 860.7,410.3 857.0,419.9 876.4,422.4 872.8,427.2 877.6,433.3 884.9,436.9 892.1,439.3 895.8,450.2 884.9,449.0 883.7,452.6 889.7,458.7 898.2,459.9 899.4,476.8 894.6,486.5 889.7,488.9 882.5,482.9 872.8,495.0 870.4,486.5 863.1,472.0 858.3,472.0 855.8,488.9 841.3,491.3 829.2,491.3 817.1,496.2 806.8,503.4" fill="#93bfe2"/>
<polygon points="806.6,538.8 818.5,533.6 842.3,526.3 848.6,533.6 858.1,539.8 867.2,544.0 869.3,557.4 871.4,576.1 877.6,585.4 895.2,589.6 896.3,610.0 892.0,631.5 897.0,634.8 920.0,648.0 926.5,657.8 926.5,664.4 918.3,672.6 915.0,680.8 930.0,689.0 946.0,701.0 942.0,707.0 925.0,695.0 906.8,687.4 903.5,675.9 910.1,671.0 918.3,662.7 910.1,652.9 893.7,639.7 887.1,631.5 883.8,610.0 877.6,593.7 863.1,583.4 856.9,575.0 848.6,562.6 839.2,560.5 830.9,562.6 806.6,568.8" fill="#93bfe2"/>
<polyline points="866.2,505.6 871.4,541.9 885.9,558.5 910.8,561.6 910.8,568.8 913.0,590.0" fill="none" stroke="#93bfe2" stroke-width="2.5" stroke-linejoin="round" stroke-linecap="round"/>
<polyline points="897.0,574.0 903.5,572.4 906.8,592.1 920.0,625.0 939.7,674.2 944.6,700.0" fill="none" stroke="#93bfe2" stroke-width="4.5" stroke-linejoin="round" stroke-linecap="round"/>
<polyline points="918.3,613.5 936.4,608.5" fill="none" stroke="#93bfe2" stroke-width="4" stroke-linejoin="round" stroke-linecap="round"/>
<polyline points="936.4,657.8 962.7,659.5" fill="none" stroke="#93bfe2" stroke-width="4" stroke-linejoin="round" stroke-linecap="round"/>
<polyline points="929.8,671.0 942.9,661.1" fill="none" stroke="#93bfe2" stroke-width="4" stroke-linejoin="round" stroke-linecap="round"/>
<polyline points="936.4,669.3 946.2,682.4" fill="none" stroke="#93bfe2" stroke-width="4" stroke-linejoin="round" stroke-linecap="round"/>
<polyline points="851.0,674.2 869.0,649.6" fill="none" stroke="#93bfe2" stroke-width="4" stroke-linejoin="round" stroke-linecap="round"/>
<polyline points="864.1,687.4 874.0,666.0" fill="none" stroke="#93bfe2" stroke-width="4" stroke-linejoin="round" stroke-linecap="round"/>
<polyline points="860.8,662.7 890.4,675.9" fill="none" stroke="#93bfe2" stroke-width="4" stroke-linejoin="round" stroke-linecap="round"/>
<polyline points="875.6,657.8 890.4,638.1" fill="none" stroke="#93bfe2" stroke-width="4" stroke-linejoin="round" stroke-linecap="round"/>
<polyline points="901.9,675.9 916.7,667.7" fill="none" stroke="#93bfe2" stroke-width="4" stroke-linejoin="round" stroke-linecap="round"/>
<polyline points="908.0,565.0 909.0,580.0" fill="none" stroke="#93bfe2" stroke-width="3" stroke-linejoin="round" stroke-linecap="round"/>
<polyline points="960.5,731.1 952.7,736.9 937.2,742.7 929.4,754.4 927.5,770.0 927.5,789.4 925.5,808.8 917.8,820.0 913.9,826.7" fill="none" stroke="#93bfe2" stroke-width="3.5" stroke-linejoin="round" stroke-linecap="round"/>
<polyline points="1069.4,717.5 1108.3,735.0 1118.0,742.7 1147.2,754.4 1186.1,762.2 1244.4,770.0 1300.0,795.2 1338.9,815.0 1397.2,838.3 1455.5,853.9" fill="none" stroke="#93bfe2" stroke-width="3" stroke-linejoin="round" stroke-linecap="round"/>
<polyline points="1467.2,748.6 1459.4,820.0 1457.5,815.0 1455.5,853.9 1494.4,879.2 1510.0,908.3 1517.7,939.4 1529.4,966.6 1550.0,982.2" fill="none" stroke="#93bfe2" stroke-width="2" stroke-linejoin="round" stroke-linecap="round"/>
<polyline points="921.6,815.0 913.9,822.8 882.8,828.6 855.5,824.7 851.7,822.8 824.4,846.1 834.2,863.6 836.1,888.9 843.9,896.7 834.2,916.1 816.7,892.8 807.0,888.9" fill="none" stroke="#93bfe2" stroke-width="2" stroke-linejoin="round" stroke-linecap="round"/>
<polyline points="913.9,826.7 915.8,840.3 945.0,859.7 948.9,863.6 976.1,873.3 987.8,873.3 999.4,877.2 1003.3,888.9" fill="none" stroke="#93bfe2" stroke-width="2.5" stroke-linejoin="round" stroke-linecap="round"/>
<polyline points="1007.2,873.3 1024.7,873.3 1040.2,857.7 1055.0,848.0" fill="none" stroke="#93bfe2" stroke-width="2" stroke-linejoin="round" stroke-linecap="round"/>
<polyline points="950.8,879.2 945.0,923.9 952.7,951.1 983.9,1009.4 987.8,1034.7" fill="none" stroke="#93bfe2" stroke-width="1.8" stroke-linejoin="round" stroke-linecap="round"/>
<polyline points="1456.0,992.0 1469.0,987.0" fill="none" stroke="#93bfe2" stroke-width="4" stroke-linejoin="round" stroke-linecap="round"/>
<polyline points="902.2,676.6 908.0,703.9 915.8,727.2 921.6,750.5 929.4,756.4" fill="none" stroke="#b9b9bb" stroke-width="1.2" stroke-dasharray="3,2.5"/>
<polyline points="885.9,490.0 893.2,507.6 885.9,515.9 888.0,548.1 893.2,557.4" fill="none" stroke="#b9b9bb" stroke-width="1.2" stroke-dasharray="3,2.5"/>
<polyline points="840.0,908.3 867.2,904.4 894.4,908.3 925.5,923.9 941.1,923.9 941.1,931.6 960.5,920.0 952.7,931.6 968.3,947.2 970.2,955.0 1001.3,943.3 1038.3,939.4 1085.0,935.0" fill="none" stroke="#b9b9bb" stroke-width="1.2" stroke-dasharray="3,2.5"/>
<polyline points="867.2,908.3 859.4,935.5 863.3,951.1 843.9,962.7 824.4,962.7 807.0,974.4" fill="none" stroke="#b9b9bb" stroke-width="1.2" stroke-dasharray="3,2.5"/>
<polyline points="1120.0,939.4 1160.8,925.8 1170.5,941.4 1166.6,951.1 1178.3,935.5 1205.5,925.8 1228.8,910.3 1242.5,931.6 1283.3,929.7 1300.0,922.0 1300.0,916.1 1338.9,910.3 1373.9,877.2 1416.6,869.4 1432.2,853.9 1475.0,826.7 1506.0,815.0" fill="none" stroke="#b9b9bb" stroke-width="1.2" stroke-dasharray="3,2.5"/>
<polyline points="1373.9,877.2 1377.8,927.8 1401.1,931.6 1420.5,921.9 1418.6,898.6 1445.8,898.6 1471.1,923.9 1447.7,931.6 1447.7,955.0 1420.5,962.7" fill="none" stroke="#b9b9bb" stroke-width="1.2" stroke-dasharray="3,2.5"/>
<polyline points="1506.0,707.8 1506.0,731.1 1533.3,754.4 1537.2,797.2 1519.7,810.8 1500.2,805.0" fill="none" stroke="#b9b9bb" stroke-width="1.2" stroke-dasharray="3,2.5"/>
<polyline points="807.0,509.1 836.1,507.2 890.5,499.4 913.9,491.6 917.8,487.7" fill="none" stroke="#fbfbf9" stroke-width="2.10" stroke-linejoin="round" stroke-linecap="round"/>
<polyline points="890.5,419.7 913.9,415.8 917.8,431.4 917.8,491.6 931.4,495.5 935.3,511.1 948.9,540.2 976.1,600.0 978.0,651.4" fill="none" stroke="#fbfbf9" stroke-width="1.75" stroke-linejoin="round" stroke-linecap="round"/>
<polyline points="826.4,423.6 855.5,439.2 857.5,495.5 859.5,506.0" fill="none" stroke="#fbfbf9" stroke-width="1.75" stroke-linejoin="round" stroke-linecap="round"/>
<polyline points="893.2,500.4 898.4,521.1 910.8,557.4 915.0,565.7 925.0,568.8 931.5,572.4 938.0,587.2 939.7,611.8 943.0,628.2 952.8,634.8 975.8,646.3 979.1,664.4" fill="none" stroke="#fbfbf9" stroke-width="1.40" stroke-linejoin="round" stroke-linecap="round"/>
<polyline points="867.4,657.8 877.3,659.5 890.4,654.5 897.0,661.1" fill="none" stroke="#fbfbf9" stroke-width="1.12" stroke-linejoin="round" stroke-linecap="round"/>
<polyline points="875.6,560.9 878.9,574.0 897.0,583.9 897.0,598.7 900.3,611.8 903.5,631.5 906.8,641.4 916.7,644.7 929.8,657.8" fill="none" stroke="#fbfbf9" stroke-width="1.40" stroke-linejoin="round" stroke-linecap="round"/>
<polyline points="920.6,429.7 976.9,418.8 989.4,409.4 1005.0,378.1" fill="none" stroke="#fbfbf9" stroke-width="1.40" stroke-linejoin="round" stroke-linecap="round"/>
<polyline points="1017.5,378.1 1017.5,408.0 1022.7,452.8" fill="none" stroke="#fbfbf9" stroke-width="1.40" stroke-linejoin="round" stroke-linecap="round"/>
<polyline points="806.6,385.9 830.0,386.7 848.8,383.6 867.5,390.6 905.0,382.0" fill="none" stroke="#fbfbf9" stroke-width="1.40" stroke-linejoin="round" stroke-linecap="round"/>
<polyline points="905.0,378.1 906.6,390.6 917.5,403.1 917.5,439.8" fill="none" stroke="#fbfbf9" stroke-width="1.40" stroke-linejoin="round" stroke-linecap="round"/>
<polyline points="1030.0,387.5 1055.0,378.1" fill="none" stroke="#fbfbf9" stroke-width="1.40" stroke-linejoin="round" stroke-linecap="round"/>
<polyline points="1186.1,378.9 1170.5,413.9 1145.3,456.6 1108.3,530.5 1079.2,569.4 1061.7,600.0 1050.0,614.0 1030.0,640.0" fill="none" stroke="#fbfbf9" stroke-width="1.75" stroke-linejoin="round" stroke-linecap="round"/>
<polyline points="1197.8,378.9 1199.7,413.9 1193.9,439.2 1174.4,511.1 1158.9,536.4 1135.5,569.4 1114.2,600.0 1088.9,624.2 1050.0,651.4 1018.9,657.2" fill="none" stroke="#fbfbf9" stroke-width="1.75" stroke-linejoin="round" stroke-linecap="round"/>
<polyline points="1160.8,536.4 1186.1,540.2 1207.5,536.4 1209.4,600.0 1205.5,610.0" fill="none" stroke="#fbfbf9" stroke-width="1.40" stroke-linejoin="round" stroke-linecap="round"/>
<polyline points="1203.6,400.3 1215.2,398.3 1252.2,378.9" fill="none" stroke="#fbfbf9" stroke-width="1.40" stroke-linejoin="round" stroke-linecap="round"/>
<polyline points="1336.9,378.9 1333.0,396.4 1342.8,423.6 1340.8,443.0 1329.2,462.5 1325.3,501.4 1321.4,550.0 1311.7,600.0 1300.0,641.7" fill="none" stroke="#fbfbf9" stroke-width="1.40" stroke-linejoin="round" stroke-linecap="round"/>
<polyline points="1348.6,378.9 1358.3,386.7 1428.3,390.6 1440.0,382.8 1461.4,378.9 1546.9,423.6" fill="none" stroke="#fbfbf9" stroke-width="1.40" stroke-linejoin="round" stroke-linecap="round"/>
<polyline points="1440.0,382.8 1447.7,410.0 1463.3,443.0 1457.5,491.6 1465.2,559.7 1482.7,573.3 1533.3,573.3 1546.9,565.5" fill="none" stroke="#fbfbf9" stroke-width="1.40" stroke-linejoin="round" stroke-linecap="round"/>
<polyline points="1463.3,445.0 1478.8,452.8 1523.6,456.6 1533.3,462.5 1546.9,448.9" fill="none" stroke="#fbfbf9" stroke-width="1.40" stroke-linejoin="round" stroke-linecap="round"/>
<polyline points="807.0,707.8 847.8,700.0 882.8,700.0 906.1,705.8 913.9,709.7 940.0,716.0" fill="none" stroke="#fbfbf9" stroke-width="1.75" stroke-linejoin="round" stroke-linecap="round"/>
<polyline points="807.0,770.0 843.9,754.4 882.8,727.2 902.2,721.3 913.9,719.4" fill="none" stroke="#fbfbf9" stroke-width="1.40" stroke-linejoin="round" stroke-linecap="round"/>
<polyline points="807.0,808.8 843.9,795.2 886.6,775.8 925.5,750.5 941.1,735.0" fill="none" stroke="#fbfbf9" stroke-width="1.75" stroke-linejoin="round" stroke-linecap="round"/>
<polyline points="875.0,696.1 902.2,653.3 921.6,630.0 941.1,618.3" fill="none" stroke="#fbfbf9" stroke-width="1.40" stroke-linejoin="round" stroke-linecap="round"/>
<polyline points="910.0,637.8 941.1,637.8 960.5,645.5 978.0,651.4 978.0,672.8" fill="none" stroke="#fbfbf9" stroke-width="1.40" stroke-linejoin="round" stroke-linecap="round"/>
<polyline points="941.1,595.0 945.0,618.3 980.0,641.7 999.4,684.4" fill="none" stroke="#fbfbf9" stroke-width="1.40" stroke-linejoin="round" stroke-linecap="round"/>
<polyline points="999.4,676.6 1016.9,672.8 1018.9,657.2 1055.0,633.9" fill="none" stroke="#fbfbf9" stroke-width="1.40" stroke-linejoin="round" stroke-linecap="round"/>
<polyline points="925.5,731.1 952.7,748.6 983.9,750.5 999.4,731.1 1000.0,700.0" fill="none" stroke="#fbfbf9" stroke-width="1.75" stroke-linejoin="round" stroke-linecap="round"/>
<polyline points="965.3,754.6 966.9,771.8 962.2,804.4 951.3,860.0 945.0,870.0 933.3,885.0 921.6,923.9 919.7,990.0 931.4,1032.7" fill="none" stroke="#fbfbf9" stroke-width="1.40" stroke-linejoin="round" stroke-linecap="round"/>
<polyline points="965.3,771.8 1008.9,771.8 1030.6,774.9 1071.1,801.3 1100.0,788.9" fill="none" stroke="#fbfbf9" stroke-width="1.40" stroke-linejoin="round" stroke-linecap="round"/>
<polyline points="984.0,757.8 982.4,779.5 993.3,804.4 993.3,860.0" fill="none" stroke="#fbfbf9" stroke-width="1.40" stroke-linejoin="round" stroke-linecap="round"/>
<polyline points="990.2,751.5 1008.9,773.3 1012.0,788.9 1007.3,820.0 1007.3,860.0" fill="none" stroke="#fbfbf9" stroke-width="1.40" stroke-linejoin="round" stroke-linecap="round"/>
<polyline points="1071.1,801.3 1071.1,820.0 1100.0,816.9" fill="none" stroke="#fbfbf9" stroke-width="1.40" stroke-linejoin="round" stroke-linecap="round"/>
<polyline points="993.3,860.0 999.4,880.0 1007.2,892.8 1015.0,931.6 1022.7,964.7 1011.1,980.2 1009.1,1009.4 1005.2,1034.7" fill="none" stroke="#fbfbf9" stroke-width="1.40" stroke-linejoin="round" stroke-linecap="round"/>
<polyline points="999.4,731.1 1055.0,715.5 1069.4,709.7 1108.3,696.1 1131.6,676.6 1160.8,641.7 1190.0,635.8 1228.8,635.8 1300.0,641.7 1358.3,642.6 1408.9,641.7 1440.0,643.6 1475.0,631.9 1513.8,610.6 1546.9,595.0" fill="none" stroke="#fbfbf9" stroke-width="1.75" stroke-linejoin="round" stroke-linecap="round"/>
<polyline points="1050.0,731.1 1088.9,742.7 1147.2,754.4 1205.5,764.1 1263.8,789.4 1300.0,801.1 1338.9,815.0 1377.8,838.3 1436.1,852.0 1451.6,861.7 1494.4,916.1 1513.8,951.1 1529.4,990.0 1547.0,1009.4" fill="none" stroke="#fbfbf9" stroke-width="1.75" stroke-linejoin="round" stroke-linecap="round"/>
<polyline points="1092.8,742.7 1123.9,727.2 1151.1,703.9 1158.9,696.1" fill="none" stroke="#fbfbf9" stroke-width="1.40" stroke-linejoin="round" stroke-linecap="round"/>
<polyline points="1127.8,746.6 1162.8,703.9 1170.5,692.2" fill="none" stroke="#fbfbf9" stroke-width="1.40" stroke-linejoin="round" stroke-linecap="round"/>
<polyline points="1209.4,694.1 1236.6,684.4 1263.8,659.2 1275.5,649.4 1300.0,641.7" fill="none" stroke="#fbfbf9" stroke-width="1.75" stroke-linejoin="round" stroke-linecap="round"/>
<polyline points="1178.3,676.6 1182.2,653.3 1193.9,633.9 1205.5,595.0" fill="none" stroke="#fbfbf9" stroke-width="1.40" stroke-linejoin="round" stroke-linecap="round"/>
<polyline points="1073.3,820.0 1073.3,801.1 1108.3,785.5 1158.9,770.0 1205.5,766.1" fill="none" stroke="#fbfbf9" stroke-width="1.40" stroke-linejoin="round" stroke-linecap="round"/>
<polyline points="1098.6,820.0 1127.8,805.0 1158.9,789.4 1205.5,779.7 1263.8,773.9 1300.0,789.4" fill="none" stroke="#fbfbf9" stroke-width="1.40" stroke-linejoin="round" stroke-linecap="round"/>
<polyline points="1261.9,756.4 1267.7,770.0 1271.6,795.2" fill="none" stroke="#fbfbf9" stroke-width="1.40" stroke-linejoin="round" stroke-linecap="round"/>
<polyline points="1340.8,602.8 1389.4,643.6 1420.5,666.9 1432.2,680.5 1447.7,701.9" fill="none" stroke="#fbfbf9" stroke-width="1.40" stroke-linejoin="round" stroke-linecap="round"/>
<polyline points="1333.0,630.0 1338.9,672.8 1348.6,762.2 1342.8,777.7 1350.5,793.3 1325.3,808.8 1300.0,815.0" fill="none" stroke="#fbfbf9" stroke-width="1.40" stroke-linejoin="round" stroke-linecap="round"/>
<polyline points="1350.5,793.3 1397.2,775.8 1447.7,764.1 1478.8,736.9 1546.9,721.3" fill="none" stroke="#fbfbf9" stroke-width="1.75" stroke-linejoin="round" stroke-linecap="round"/>
<polyline points="1447.7,764.1 1494.4,791.3 1533.3,820.0" fill="none" stroke="#fbfbf9" stroke-width="1.40" stroke-linejoin="round" stroke-linecap="round"/>
<polyline points="855.5,815.0 855.5,830.6 886.6,853.9 921.6,885.0 937.2,888.9" fill="none" stroke="#fbfbf9" stroke-width="1.40" stroke-linejoin="round" stroke-linecap="round"/>
<polyline points="807.0,925.8 843.9,912.2 878.9,902.5 902.2,896.7 937.2,886.9" fill="none" stroke="#fbfbf9" stroke-width="1.75" stroke-linejoin="round" stroke-linecap="round"/>
<polyline points="931.4,898.6 956.6,908.3 970.2,900.5 1001.3,900.5 1018.9,894.7 1055.0,896.7" fill="none" stroke="#fbfbf9" stroke-width="1.40" stroke-linejoin="round" stroke-linecap="round"/>
<polyline points="1007.2,815.0 1007.2,863.6 1026.6,892.8 1055.0,931.6 1083.0,970.5 1102.5,997.7 1137.5,1034.7" fill="none" stroke="#fbfbf9" stroke-width="1.40" stroke-linejoin="round" stroke-linecap="round"/>
<polyline points="1022.7,964.7 1032.5,980.2 1032.5,1009.4 1018.9,1034.7" fill="none" stroke="#fbfbf9" stroke-width="1.40" stroke-linejoin="round" stroke-linecap="round"/>
<polyline points="807.0,974.4 834.2,1034.7" fill="none" stroke="#fbfbf9" stroke-width="1.40" stroke-linejoin="round" stroke-linecap="round"/>
<polyline points="1088.9,822.8 1114.2,848.0 1147.2,863.6 1170.5,879.2 1256.1,951.1 1263.8,962.7 1260.0,984.1" fill="none" stroke="#fbfbf9" stroke-width="1.75" stroke-linejoin="round" stroke-linecap="round"/>
<polyline points="1108.3,900.5 1127.8,887.0 1166.6,879.2" fill="none" stroke="#fbfbf9" stroke-width="1.40" stroke-linejoin="round" stroke-linecap="round"/>
<polyline points="1050.0,1023.0 1098.6,997.7 1120.0,980.2" fill="none" stroke="#fbfbf9" stroke-width="1.40" stroke-linejoin="round" stroke-linecap="round"/>
<polyline points="1186.1,1034.7 1201.6,1009.4 1252.2,986.1 1300.0,990.0 1358.3,984.0 1393.3,980.0 1420.5,988.0 1465.2,974.4 1513.8,951.1 1547.0,947.2" fill="none" stroke="#fbfbf9" stroke-width="1.75" stroke-linejoin="round" stroke-linecap="round"/>
<polyline points="1261.9,966.6 1300.0,976.4 1348.6,972.5 1393.3,970.5 1405.0,962.7" fill="none" stroke="#fbfbf9" stroke-width="1.40" stroke-linejoin="round" stroke-linecap="round"/>
<polyline points="1256.1,951.1 1263.8,931.6 1275.5,900.5 1300.0,879.2" fill="none" stroke="#fbfbf9" stroke-width="1.40" stroke-linejoin="round" stroke-linecap="round"/>
<polyline points="1329.2,815.0 1329.2,850.0 1309.7,861.7 1300.0,873.3" fill="none" stroke="#fbfbf9" stroke-width="1.40" stroke-linejoin="round" stroke-linecap="round"/>
<polyline points="1405.0,958.9 1475.0,908.3 1486.6,906.3 1547.0,927.8" fill="none" stroke="#fbfbf9" stroke-width="1.40" stroke-linejoin="round" stroke-linecap="round"/>
<polyline points="1513.8,838.3 1509.9,853.9 1509.9,892.8 1504.1,902.5" fill="none" stroke="#fbfbf9" stroke-width="1.40" stroke-linejoin="round" stroke-linecap="round"/>
<polyline points="1513.8,838.3 1547.0,826.7" fill="none" stroke="#fbfbf9" stroke-width="1.40" stroke-linejoin="round" stroke-linecap="round"/>
<polyline points="1358.3,1040.0 1364.2,1009.4 1377.8,999.7 1420.5,988.0" fill="none" stroke="#fbfbf9" stroke-width="1.40" stroke-linejoin="round" stroke-linecap="round"/>
<polyline points="855.5,561.6 931.4,557.7 935.3,577.2 964.4,581.1 993.6,571.3 991.6,557.7 972.2,522.7 964.4,509.1 970.2,499.4 970.2,491.6 960.5,483.9 966.3,480.0 999.4,462.5 1015.0,460.5 1022.7,452.8 1050.0,448.9 1063.6,447.9 1069.4,456.6 1059.7,481.9 1061.7,509.1 1088.9,499.4 1123.9,507.2 1131.6,511.1 1139.4,507.2 1149.1,507.2 1149.1,487.7 1166.6,480.0 1172.5,464.4 1182.2,460.5 1190.0,446.9 1205.5,429.4 1221.1,424.6 1225.0,429.4 1244.4,435.3 1248.3,446.9 1261.9,448.9 1260.0,470.2 1263.8,474.1 1250.2,481.9 1254.1,511.1 1260.0,515.0" fill="none" stroke="#858582" stroke-width="1" stroke-linejoin="round"/>
<polyline points="855.5,561.6 871.1,583.0 857.5,600.0 807.0,657.2" fill="none" stroke="#858582" stroke-width="1" stroke-linejoin="round"/>
<polyline points="1215.2,509.1 1228.8,524.7 1263.8,518.9 1277.4,522.7 1289.1,516.9 1300.0,522.7 1307.8,526.6 1317.5,536.4 1311.7,540.2 1321.4,532.5 1368.0,489.7 1371.9,468.3 1370.0,460.5 1387.5,443.0 1391.4,445.0 1395.3,458.6 1418.6,458.6 1434.1,501.4 1412.8,540.2 1451.6,588.8 1453.6,600.0 1451.6,595.0 1453.6,620.3 1471.1,626.1 1496.3,614.4 1523.6,633.9 1513.8,670.8 1519.7,678.6 1546.9,674.7" fill="none" stroke="#858582" stroke-width="1" stroke-linejoin="round"/>
<text x="975" y="399" font-size="14" fill="#8f8f8d" text-anchor="start" textLength="72" lengthAdjust="spacingAndGlyphs">Roosendaal</text>
<rect x="807" y="377" width="740" height="47" fill="#ffffff" fill-opacity="0.55"/>
<circle cx="1004.6" cy="484.8" r="10.7" fill="#4433ff" fill-opacity="0.9"/>
<circle cx="1225.9" cy="497.1" r="14.6" fill="#4433ff" fill-opacity="0.9"/>
<circle cx="1277.4" cy="553.8" r="17.5" fill="#4433ff" fill-opacity="0.9"/>
<circle cx="1308.3" cy="507.2" r="14.6" fill="#4433ff" fill-opacity="0.9"/>
<circle cx="1374.3" cy="508.6" r="14.8" fill="#4433ff" fill-opacity="0.9"/>
<circle cx="960.1" cy="607.5" r="17.5" fill="#4433ff" fill-opacity="0.9"/>
<circle cx="1000.8" cy="610.6" r="10.3" fill="#4433ff" fill-opacity="0.9"/>
<circle cx="968.0" cy="700.0" r="31.5" fill="#4433ff" fill-opacity="0.9"/>
<circle cx="922.6" cy="720.0" r="14.2" fill="#4433ff" fill-opacity="0.9"/>
<circle cx="1048.0" cy="713.2" r="20.4" fill="#4433ff" fill-opacity="0.9"/>
<circle cx="1029.5" cy="752.9" r="10.7" fill="#4433ff" fill-opacity="0.9"/>
<circle cx="994.2" cy="788.8" r="14.6" fill="#4433ff" fill-opacity="0.9"/>
<circle cx="1028.6" cy="800.0" r="17.5" fill="#4433ff" fill-opacity="0.9"/>
<circle cx="934.9" cy="801.5" r="10.3" fill="#4433ff" fill-opacity="0.9"/>
<circle cx="962.0" cy="813.7" r="17.5" fill="#4433ff" fill-opacity="0.9"/>
<circle cx="1041.0" cy="810.8" r="14.0" fill="#4433ff" fill-opacity="0.9"/>
<circle cx="1246.9" cy="635.2" r="17.9" fill="#4433ff" fill-opacity="0.9"/>
<circle cx="1292.0" cy="631.0" r="10.7" fill="#4433ff" fill-opacity="0.9"/>
<circle cx="1156.5" cy="687.7" r="17.5" fill="#4433ff" fill-opacity="0.9"/>
<circle cx="1257.6" cy="687.3" r="10.7" fill="#4433ff" fill-opacity="0.9"/>
<circle cx="1421.1" cy="610.6" r="10.3" fill="#4433ff" fill-opacity="0.9"/>
<circle cx="1328.8" cy="621.0" r="10.3" fill="#4433ff" fill-opacity="0.9"/>
<circle cx="1410.2" cy="679.0" r="10.7" fill="#4433ff" fill-opacity="0.9"/>
<circle cx="1329.2" cy="691.6" r="10.7" fill="#4433ff" fill-opacity="0.9"/>
<circle cx="1443.5" cy="701.9" r="22.4" fill="#4433ff" fill-opacity="0.9"/>
<circle cx="1459.4" cy="729.1" r="20.0" fill="#4433ff" fill-opacity="0.9"/>
<circle cx="1477.3" cy="781.6" r="22.7" fill="#4433ff" fill-opacity="0.9"/>
<circle cx="873.4" cy="855.8" r="14.6" fill="#4433ff" fill-opacity="0.9"/>
<circle cx="886.6" cy="888.5" r="10.5" fill="#4433ff" fill-opacity="0.9"/>
<circle cx="1005.2" cy="919.0" r="26.8" fill="#4433ff" fill-opacity="0.9"/>
<circle cx="1053.3" cy="851.0" r="14.6" fill="#4433ff" fill-opacity="0.9"/>
<circle cx="1062.0" cy="888.0" r="18.0" fill="#4433ff" fill-opacity="0.9"/>
<circle cx="1085.6" cy="930.3" r="35.0" fill="#4433ff" fill-opacity="0.9"/>
<circle cx="1188.4" cy="870.8" r="17.9" fill="#4433ff" fill-opacity="0.9"/>
<circle cx="1244.4" cy="889.8" r="20.4" fill="#4433ff" fill-opacity="0.9"/>
<circle cx="1287.6" cy="900.0" r="14.6" fill="#4433ff" fill-opacity="0.9"/>
<circle cx="1364.2" cy="867.9" r="10.7" fill="#4433ff" fill-opacity="0.9"/>
<text x="927.5" y="728.7" font-size="18.5" fill="#333" stroke="#fff" stroke-width="2.5" stroke-opacity="0.8" paint-order="stroke" text-anchor="start" textLength="92.3" lengthAdjust="spacingAndGlyphs">Antwerpen</text>
<text x="1157" y="698.3" font-size="14" fill="#555" stroke="#fff" stroke-width="2.5" stroke-opacity="0.8" paint-order="stroke" text-anchor="start" textLength="53.4" lengthAdjust="spacingAndGlyphs">Antwerp</text>
<text x="1303.5" y="619.4" font-size="14" fill="#555" stroke="#fff" stroke-width="2.5" stroke-opacity="0.8" paint-order="stroke" text-anchor="start" textLength="58.3" lengthAdjust="spacingAndGlyphs">Turnhout</text>
<text x="1346" y="788.4" font-size="14" fill="#555" stroke="#fff" stroke-width="2.5" stroke-opacity="0.8" paint-order="stroke" text-anchor="start" textLength="27.9" lengthAdjust="spacingAndGlyphs">Geel</text>
<text x="985.8" y="928.7" font-size="18.5" fill="#333" stroke="#fff" stroke-width="2.5" stroke-opacity="0.8" paint-order="stroke" text-anchor="start" textLength="82.2" lengthAdjust="spacingAndGlyphs">Mechelen</text>
<text x="807.5" y="926" font-size="14" fill="#555" stroke="#fff" stroke-width="2.5" stroke-opacity="0.8" paint-order="stroke" text-anchor="start" textLength="14.5" lengthAdjust="spacingAndGlyphs">de</text>
<text x="1486.2" y="904.8" font-size="13.5" fill="#555" stroke="#fff" stroke-width="2.5" stroke-opacity="0.8" paint-order="stroke" text-anchor="start" textLength="55.8" lengthAdjust="spacingAndGlyphs">Beringen</text>
<text x="829.3" y="407.1" font-size="19" font-weight="bold" fill="#505050" textLength="209.6" lengthAdjust="spacingAndGlyphs">Property prices per region</text>
<path d="M1445,378.5 Q1449,382 1452.5,377.5" fill="none" stroke="#555" stroke-width="2"/>
<polygon points="1211,976 1219,976 1215,983" fill="#444"/>
<text x="1210" y="1004" font-size="11" fill="#444" font-family="Liberation Sans, sans-serif">©</text>
<text x="1227.9" y="1007.5" font-size="13.5" fill="#3a3a3a" stroke="#fff" stroke-width="2" stroke-opacity="0.6" paint-order="stroke" font-family="Liberation Mono, monospace" textLength="296.6" lengthAdjust="spacingAndGlyphs">MapTiler OpenStreetMap contributors</text>
</svg>
</div>
<div class="abs" style="left:809px;top:376.5px;width:14px;height:1.2px;background:#d4d4d4"></div>
</body></html>
